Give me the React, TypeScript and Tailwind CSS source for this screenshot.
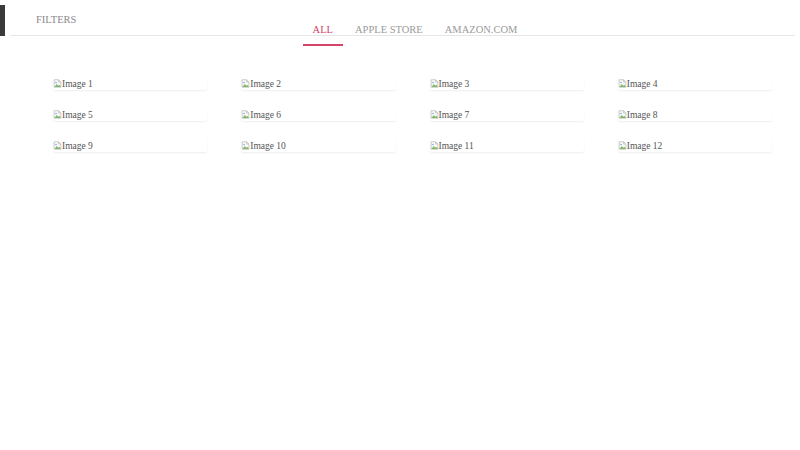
import { useState } from 'react';

const tabs = ['ALL', 'APPLE STORE', 'AMAZON.COM'];

const images = Array.from({ length: 12 }, (_, index) => ({
  id: index + 1,
  alt: `Image ${index + 1}`,
}));

function BrokenImage({ alt }: { alt: string }) {
  return (
    <span className="flex items-center text-[9.5px] leading-[12px] text-[#555]">
      <svg width="9" height="11" viewBox="0 0 12 13" className="shrink-0">
        <path d="M1.5 1.5h6l3 3v7h-9z" fill="#fafafa" stroke="#b9b9b9" />
        <path d="M7.5 1.5v3h3" fill="none" stroke="#b9b9b9" />
        <path d="M2 11l3-4 2 2.5 1.5-1.5 2 3z" fill="#7fb86a" />
        <circle cx="4" cy="5" r="1" fill="#6aa6d8" />
      </svg>
      {alt}
    </span>
  );
}

export default function App() {
  const [active, setActive] = useState('ALL');

  return (
    <div className="min-h-[450px] w-[800px] bg-white font-['Liberation_Serif',serif]">
      <div className="flex">
        <div className="mt-[5px] h-[31px] w-[5px] bg-[#3a3a3a]" />
        <div className="mx-[5px] h-[36px] flex-1 border-b border-[#e6e6e6]">
          <div className="pl-[26px] pt-[14px] text-[10.5px] leading-[12px] text-[#8a8a8a]">FILTERS</div>
        </div>
      </div>

      <div className="-mt-[14px] flex justify-center gap-[2px] pl-[30px]">
        {tabs.map((tab) => (
          <button
            key={tab}
            type="button"
            onClick={() => setActive(tab)}
            className={
              tab === active
                ? 'border-b-2 border-[#d4436a] px-[10px] pb-[6px] text-[10.5px] leading-[16px] text-[#d4436a]'
                : 'border-b-2 border-transparent px-[10px] pb-[6px] text-[10.5px] leading-[16px] text-[#9a9a9a]'
            }
          >
            {tab}
          </button>
        ))}
      </div>

      <div className="mt-[31px] grid grid-cols-4 gap-x-[34px] gap-y-[18px] pl-[53px] pr-[28px]">
        {images.map((image) => (
          <div
            key={image.id}
            className="flex h-[13px] items-center rounded-[2px] bg-white shadow-[0_1px_2px_rgba(0,0,0,0.07)]"
          >
            <BrokenImage alt={image.alt} />
          </div>
        ))}
      </div>
    </div>
  );
}
